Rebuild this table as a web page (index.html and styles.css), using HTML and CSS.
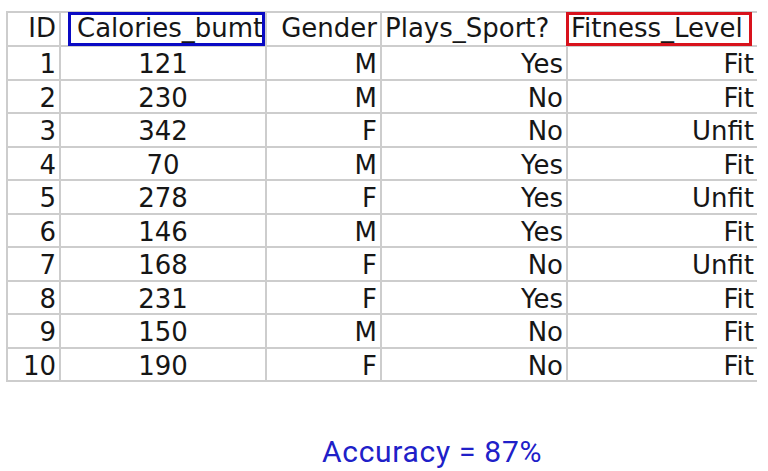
FILE: index.html
```html
<!DOCTYPE html>
<html>
<head>
<meta charset="utf-8">
<link rel="stylesheet" href="styles.css">
</head>
<body>
<div class="page">
  <table class="sheet">
    <colgroup>
      <col class="c-id">
      <col class="c-cal">
      <col class="c-gen">
      <col class="c-spt">
      <col class="c-fit">
    </colgroup>
    <thead>
      <tr>
        <th class="r">ID</th>
        <th class="cal"><span class="hl hl-blue"></span>Calories_bumt</th>
        <th class="r">Gender</th>
        <th class="l">Plays_Sport?</th>
        <th class="l fit"><span class="hl hl-red"></span>Fitness_Level</th>
      </tr>
    </thead>
    <tbody>
      <tr><td class="r">1</td><td class="c">121</td><td class="r">M</td><td class="r">Yes</td><td class="r last">Fit</td></tr>
      <tr><td class="r">2</td><td class="c">230</td><td class="r">M</td><td class="r">No</td><td class="r last">Fit</td></tr>
      <tr><td class="r">3</td><td class="c">342</td><td class="r">F</td><td class="r">No</td><td class="r last">Unfit</td></tr>
      <tr><td class="r">4</td><td class="c">70</td><td class="r">M</td><td class="r">Yes</td><td class="r last">Fit</td></tr>
      <tr><td class="r">5</td><td class="c">278</td><td class="r">F</td><td class="r">Yes</td><td class="r last">Unfit</td></tr>
      <tr><td class="r">6</td><td class="c">146</td><td class="r">M</td><td class="r">Yes</td><td class="r last">Fit</td></tr>
      <tr><td class="r">7</td><td class="c">168</td><td class="r">F</td><td class="r">No</td><td class="r last">Unfit</td></tr>
      <tr><td class="r">8</td><td class="c">231</td><td class="r">F</td><td class="r">Yes</td><td class="r last">Fit</td></tr>
      <tr><td class="r">9</td><td class="c">150</td><td class="r">M</td><td class="r">No</td><td class="r last">Fit</td></tr>
      <tr><td class="r">10</td><td class="c">190</td><td class="r">F</td><td class="r">No</td><td class="r last">Fit</td></tr>
    </tbody>
  </table>
  <p class="accuracy">Accuracy = 87%</p>
</div>
</body>
</html>
```
FILE: styles.css
```css
html, body {
  margin: 0;
  padding: 0;
  background: #ffffff;
}

.page {
  padding-top: 11px;
  padding-left: 6px;
}

.sheet {
  border-collapse: collapse;
  table-layout: fixed;
  width: 750px;
  font-family: "DejaVu Sans", sans-serif;
  font-size: 26px;
  color: #161616;
}

.c-id { width: 53px; }
.c-cal { width: 206px; }
.c-gen { width: 115px; }
.c-spt { width: 186px; }
.c-fit { width: 190px; }

.sheet th,
.sheet td {
  border: 2px solid #cdcdcd;
  padding: 3px 3px 0;
  height: 28.5px;
  line-height: 28px;
  font-weight: normal;
  white-space: nowrap;
  overflow: visible;
  vertical-align: middle;
}

.sheet th {
  padding-top: 0;
  padding-bottom: 3px;
  height: 29px;
}

.sheet th:last-child,
.sheet td:last-child {
  border-right: none;
}

.r { text-align: right; }
.l { text-align: left; }
.c { text-align: center; }

.sheet th.cal {
  position: relative;
  text-align: left;
  padding-left: 16px;
}

.sheet th.fit {
  position: relative;
  padding-left: 3px;
}

.hl {
  position: absolute;
  top: -1px;
  bottom: -1px;
  border: 3px solid;
  box-sizing: border-box;
}

.hl-blue {
  left: 7px;
  right: 0;
  border-color: #0a0ac4;
}

.hl-red {
  left: -2px;
  right: 5px;
  border-color: #d8121c;
}

.accuracy {
  margin: 53px 0 0 316px;
  font-family: Roboto, "Liberation Sans", sans-serif;
  font-size: 30px;
  letter-spacing: 0.7px;
  color: #2020c8;
  line-height: 34px;
}
```
